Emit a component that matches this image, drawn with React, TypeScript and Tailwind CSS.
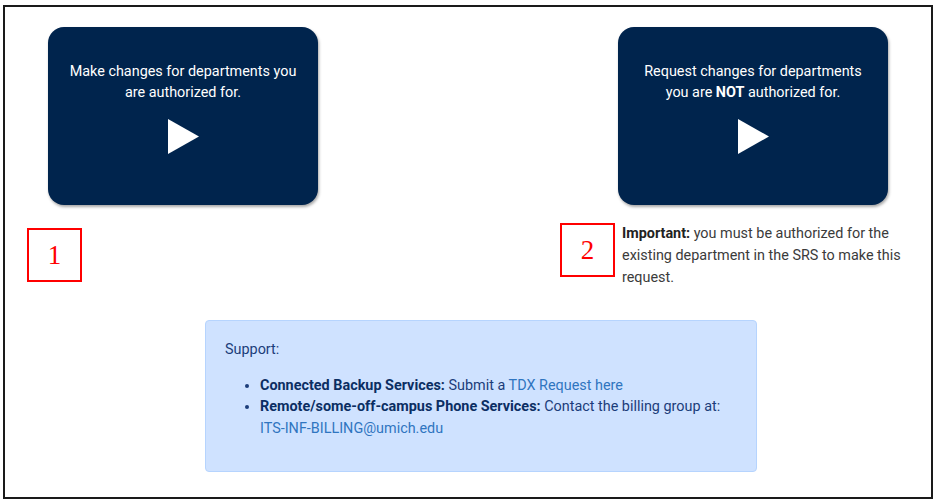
import type { ReactNode } from 'react';

interface ActionCardProps {
  children: ReactNode;
}

function PlayIcon() {
  return (
    <svg width="31" height="35" viewBox="0 0 31 35" className="mx-auto">
      <polygon points="0,0 31,17.5 0,35" fill="#ffffff" />
    </svg>
  );
}

function ActionCard({ children }: ActionCardProps) {
  return (
    <div className="w-[270px] h-[178px] rounded-[16px] bg-[#00244d] shadow-[1px_2px_3px_rgba(0,0,0,0.35)] pt-[34px] text-center">
      <p className="text-white text-[14.4px] leading-[21px] px-[12px]">{children}</p>
      <div className="mt-[16px]">
        <PlayIcon />
      </div>
    </div>
  );
}

function Marker({ n, className }: { n: string; className: string }) {
  return (
    <div
      className={`absolute w-[55px] h-[54px] border-2 border-[#ff0000] flex items-center justify-center text-[#ff0000] text-[27px] ${className}`}
      style={{ fontFamily: '"Liberation Serif", "Times New Roman", serif' }}
    >
      {n}
    </div>
  );
}

export default function App() {
  return (
    <div className="w-[936px] h-[504px] bg-white pt-[5px] pl-[3px]" style={{ fontFamily: 'Roboto, "Liberation Sans", sans-serif' }}>
      <div className="relative w-[930px] h-[494px] border-2 border-[#1a1a1a]">
        <div className="flex justify-between px-[43px] pt-[20px]">
          <div className="w-[270px]">
            <ActionCard>Make changes for departments you are authorized for.</ActionCard>
          </div>
          <div className="w-[270px]">
            <ActionCard>
              Request changes for departments
              <br />
              you are <b className="font-bold">NOT</b> authorized for.
            </ActionCard>
            <p className="mt-[18px] ml-[4px] w-[290px] text-[14.4px] leading-[22px] text-[#3b3b3b]">
              <b className="font-bold text-[#222]">Important:</b> you must be authorized for the existing department in the SRS to make this request.
            </p>
          </div>
        </div>

        <div className="mt-[31px] ml-[200px] w-[552px] h-[152px] rounded-[4px] bg-[#cfe2ff] border border-[#b6d4fe] pt-[18px] pl-[19px] text-[14.4px] leading-[21.5px] text-[#1c3d7a]">
          <p>Support:</p>
          <ul className="mt-[14px] pl-[35px] list-disc">
            <li>
              <b className="font-bold text-[#0b2e63]">Connected Backup Services:</b> Submit a{' '}
              <a className="text-[#2f75c0]">TDX Request here</a>
            </li>
            <li>
              <b className="font-bold text-[#0b2e63]">Remote/some-off-campus Phone Services:</b> Contact the billing group at:{' '}
              <a className="text-[#2f75c0] whitespace-nowrap">ITS-INF-BILLING@umich.edu</a>
            </li>
          </ul>
        </div>

        <Marker n="1" className="left-[22px] top-[221px]" />
        <Marker n="2" className="left-[555px] top-[216px]" />
      </div>
    </div>
  );
}
